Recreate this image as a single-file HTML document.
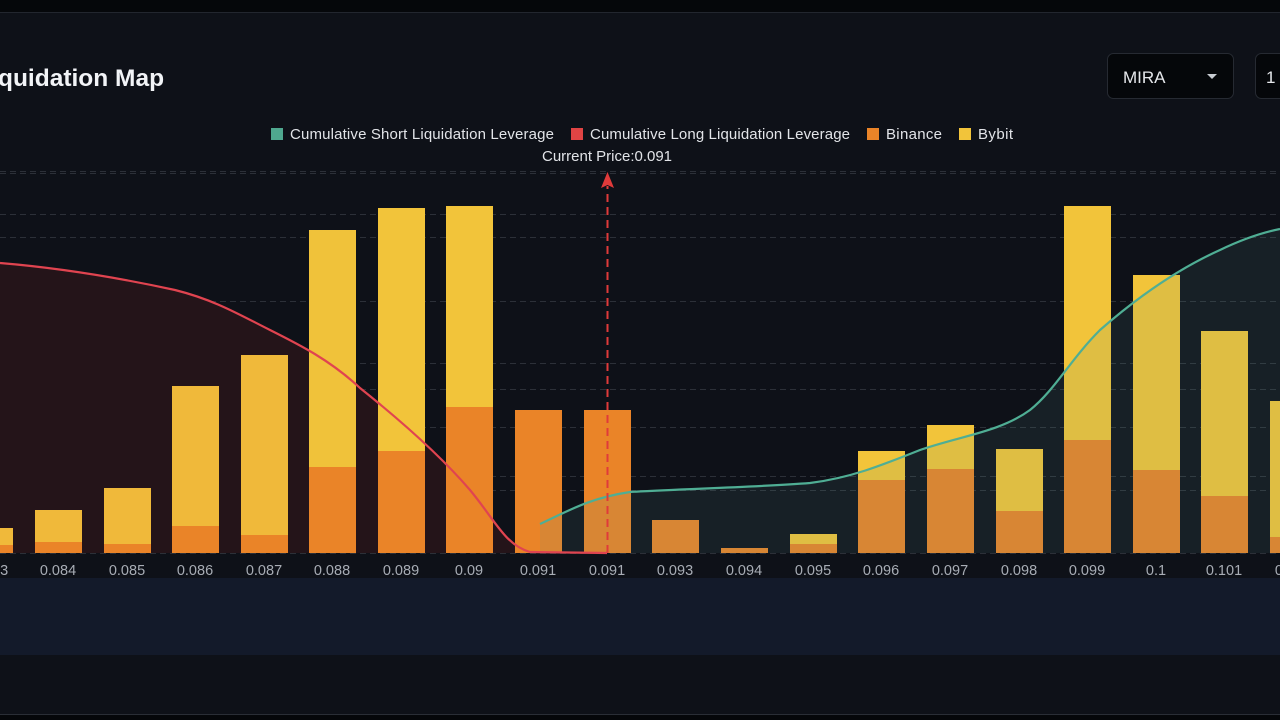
<!DOCTYPE html>
<html><head><meta charset="utf-8"><style>
html,body{margin:0;padding:0;width:1280px;height:720px;overflow:hidden;background:#05070a;font-family:"Liberation Sans",sans-serif}
</style></head><body>
<svg width="1280" height="720" viewBox="0 0 1280 720" xmlns="http://www.w3.org/2000/svg" style="display:block">
<rect x="0" y="0" width="1280" height="720" fill="#05070a"/>
<rect x="0" y="12" width="1280" height="702" fill="#0e1118"/>
<line x1="0" y1="12.5" x2="1280" y2="12.5" stroke="#22262e"/>
<rect x="0" y="578" width="1280" height="77" fill="#131a2a"/>
<line x1="0" y1="714.5" x2="1280" y2="714.5" stroke="#2a2e36"/>
<text x="-2" y="86" fill="#f2f4f7" font-size="24.5" font-weight="bold">quidation Map</text>
<rect x="1107.5" y="53.5" width="126" height="45" rx="6" fill="#05070a" stroke="#262a32"/>
<text x="1123" y="83" fill="#e6e8ec" font-size="17">MIRA</text>
<path d="M1207 74h10l-5 5z" fill="#c8ccd2"/>
<rect x="1255.5" y="53.5" width="40" height="45" rx="6" fill="#05070a" stroke="#262a32"/>
<text x="1266" y="83" fill="#e6e8ec" font-size="17">1</text>
<g font-size="15" fill="#e2e4e8">
<rect x="271" y="128" width="12" height="12" fill="#4fa88f"/><text x="290" y="139" textLength="264">Cumulative Short Liquidation Leverage</text>
<rect x="571" y="128" width="12" height="12" fill="#e04444"/><text x="590" y="139" textLength="260">Cumulative Long Liquidation Leverage</text>
<rect x="867" y="128" width="12" height="12" fill="#ea8428"/><text x="886" y="139" textLength="56">Binance</text>
<rect x="959" y="128" width="12" height="12" fill="#f2c43a"/><text x="978" y="139" textLength="35">Bybit</text>
<text x="542" y="161" textLength="130">Current Price:0.091</text>
</g>
<g stroke="#2c3038" stroke-dasharray="6 4" stroke-width="1">
<line x1="0" y1="171.5" x2="1280" y2="171.5"/><line x1="0" y1="173.5" x2="1280" y2="173.5"/>
<line x1="0" y1="214.5" x2="1280" y2="214.5"/><line x1="0" y1="237.5" x2="1280" y2="237.5"/>
<line x1="0" y1="301.5" x2="1280" y2="301.5"/><line x1="0" y1="363.5" x2="1280" y2="363.5"/>
<line x1="0" y1="389.5" x2="1280" y2="389.5"/><line x1="0" y1="427.5" x2="1280" y2="427.5"/>
<line x1="0" y1="476.5" x2="1280" y2="476.5"/><line x1="0" y1="490.5" x2="1280" y2="490.5"/>
<line x1="0" y1="553.5" x2="1280" y2="553.5"/>
</g>
<path d="M0 263 C60 268 120 278 175 290 C215 300 240 315 270 330 C300 345 330 360 360 388 C400 420 440 455 470 490 C495 520 505 545 530 552 L607 553 L0 553Z" fill="#241419"/>
<g>
<rect x="-14" y="528" width="27" height="25" fill="#f0b93a"/><rect x="-14" y="545" width="27" height="8" fill="#ea8428"/>
<rect x="35" y="510" width="47" height="43" fill="#f0b93a"/><rect x="35" y="542" width="47" height="11" fill="#ea8428"/>
<rect x="104" y="488" width="47" height="65" fill="#f0b93a"/><rect x="104" y="544" width="47" height="9" fill="#ea8428"/>
<rect x="172" y="386" width="47" height="167" fill="#f0b93a"/><rect x="172" y="526" width="47" height="27" fill="#ea8428"/>
<rect x="241" y="355" width="47" height="198" fill="#f0b93a"/><rect x="241" y="535" width="47" height="18" fill="#ea8428"/>
<rect x="309" y="230" width="47" height="323" fill="#f0c23a"/><rect x="309" y="467" width="47" height="86" fill="#ea8428"/>
<rect x="378" y="208" width="47" height="345" fill="#f2c43a"/><rect x="378" y="451" width="47" height="102" fill="#ea8428"/>
<rect x="446" y="206" width="47" height="347" fill="#f2c43a"/><rect x="446" y="407" width="47" height="146" fill="#ea8428"/>
<rect x="515" y="410" width="47" height="143" fill="#ea8428"/>
<rect x="584" y="410" width="47" height="143" fill="#ea8428"/>
<rect x="652" y="520" width="47" height="33" fill="#ea8428"/>
<rect x="721" y="548" width="47" height="5" fill="#ea8428"/>
<rect x="790" y="534" width="47" height="19" fill="#f2c43a"/><rect x="790" y="544" width="47" height="9" fill="#ea8428"/>
<rect x="858" y="451" width="47" height="102" fill="#f2c43a"/><rect x="858" y="480" width="47" height="73" fill="#ea8428"/>
<rect x="927" y="425" width="47" height="128" fill="#f2c43a"/><rect x="927" y="469" width="47" height="84" fill="#ea8428"/>
<rect x="996" y="449" width="47" height="104" fill="#f2c43a"/><rect x="996" y="511" width="47" height="42" fill="#ea8428"/>
<rect x="1064" y="206" width="47" height="347" fill="#f2c43a"/><rect x="1064" y="440" width="47" height="113" fill="#ea8428"/>
<rect x="1133" y="275" width="47" height="278" fill="#f2c43a"/><rect x="1133" y="470" width="47" height="83" fill="#ea8428"/>
<rect x="1201" y="331" width="47" height="222" fill="#f2c43a"/><rect x="1201" y="496" width="47" height="57" fill="#ea8428"/>
<rect x="1270" y="401" width="20" height="152" fill="#f2c43a"/><rect x="1270" y="537" width="20" height="16" fill="#ea8428"/>
</g>
<path d="M540 524 C570 510 590 498 630 492 C680 489 760 487 810 483 C850 478 880 466 920 450 C960 436 1000 432 1030 410 C1055 390 1070 360 1100 330 C1140 295 1180 268 1220 250 C1245 238 1265 232 1280 229 L1280 553 L540 553Z" fill="#5d968c" fill-opacity="0.12"/>
<path d="M540 524 C570 510 590 498 630 492 C680 489 760 487 810 483 C850 478 880 466 920 450 C960 436 1000 432 1030 410 C1055 390 1070 360 1100 330 C1140 295 1180 268 1220 250 C1245 238 1265 232 1280 229" fill="none" stroke="#4fae94" stroke-width="2.2"/>
<path d="M0 263 C60 268 120 278 175 290 C215 300 240 315 270 330 C300 345 330 360 360 388 C400 420 440 455 470 490 C495 520 505 545 530 552 L607 553" fill="none" stroke="#e04450" stroke-width="2.2"/>
<line x1="607.5" y1="553" x2="607.5" y2="186" stroke="#e03a3a" stroke-width="2" stroke-dasharray="8 5"/>
<path d="M601 188 L607.5 172 L614 188 L607.5 185Z" fill="#e03a3a"/>
<g font-size="14.5" fill="#a8adb5" text-anchor="middle">
<text x="-10" y="575">0.083</text><text x="58" y="575">0.084</text><text x="127" y="575">0.085</text><text x="195" y="575">0.086</text><text x="264" y="575">0.087</text><text x="332" y="575">0.088</text><text x="401" y="575">0.089</text><text x="469" y="575">0.09</text><text x="538" y="575">0.091</text><text x="607" y="575">0.091</text><text x="675" y="575">0.093</text><text x="744" y="575">0.094</text><text x="813" y="575">0.095</text><text x="881" y="575">0.096</text><text x="950" y="575">0.097</text><text x="1019" y="575">0.098</text><text x="1087" y="575">0.099</text><text x="1156" y="575">0.1</text><text x="1224" y="575">0.101</text><text x="1293" y="575">0.102</text>
</g>
</svg>
</body></html>
